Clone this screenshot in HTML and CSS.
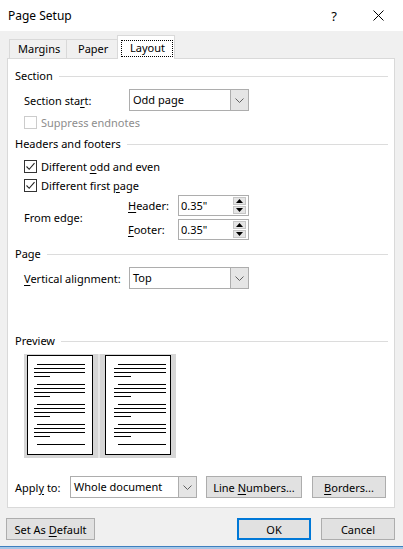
FILE: index.html
```html
<!DOCTYPE html>
<html lang="en">
<head>
    <meta charset="UTF-8">
    <title>Page Setup</title>
    <link rel="stylesheet" href="styles.css">
</head>
<body>
    <div class="titlebar">
        <span class="title">Page Setup</span>
        <span class="help">?</span>
        <svg class="close" width="11" height="11" viewBox="0 0 11 11">
            <path d="M0.5 0.5 L10.5 10.5 M10.5 0.5 L0.5 10.5" stroke="#000" stroke-width="1"/>
        </svg>
    </div>

    <div class="dialog">
        <div class="tabs">
            <div class="tab tab-first">Margins</div>
            <div class="tab">Paper</div>
            <div class="tab selected"><span class="focus">Layout</span></div>
        </div>

        <div class="panel">
            <div class="group-title">Section</div>
            <div class="row indent row-combo">
                <span class="label">Section sta<u>r</u>t:</span>
                <div class="combo combo-wide">
                    <span class="value">Odd page</span>
                    <span class="drop"><svg width="9" height="5" viewBox="0 0 9 5"><path d="M0.5 0.5 L4.5 4.5 L8.5 0.5" fill="none" stroke="#606060"/></svg></span>
                </div>
            </div>
            <label class="check indent disabled check-suppress">
                <span class="box"></span><span>Suppress endnotes</span>
            </label>

            <div class="group-title gt-headers">Headers and footers</div>
            <label class="check indent check-odd">
                <span class="box"><svg width="11" height="11" viewBox="0 0 11 11"><path d="M1.5 5.5 L4.2 8.3 L9.5 2.2" fill="none" stroke="#222" stroke-width="1.1"/></svg></span><span>Different <u>o</u>dd and even</span>
            </label>
            <label class="check indent check-first">
                <span class="box"><svg width="11" height="11" viewBox="0 0 11 11"><path d="M1.5 5.5 L4.2 8.3 L9.5 2.2" fill="none" stroke="#222" stroke-width="1.1"/></svg></span><span>Different first <u>p</u>age</span>
            </label>
            <div class="edge indent">
                <span class="label">From edge:</span>
                <div class="spins">
                    <div class="spin-row">
                        <span class="spin-label"><u>H</u>eader:</span>
                        <div class="spin">
                            <span class="value">0.35"</span>
                            <span class="arrows">
                                <span class="arrow"><svg width="7" height="4" viewBox="0 0 7 4"><path d="M0 4 L3.5 0 L7 4 Z" fill="#000"/></svg></span>
                                <span class="arrow"><svg width="7" height="4" viewBox="0 0 7 4"><path d="M0 0 L3.5 4 L7 0 Z" fill="#000"/></svg></span>
                            </span>
                        </div>
                    </div>
                    <div class="spin-row">
                        <span class="spin-label"><u>F</u>ooter:</span>
                        <div class="spin">
                            <span class="value">0.35"</span>
                            <span class="arrows">
                                <span class="arrow"><svg width="7" height="4" viewBox="0 0 7 4"><path d="M0 4 L3.5 0 L7 4 Z" fill="#000"/></svg></span>
                                <span class="arrow"><svg width="7" height="4" viewBox="0 0 7 4"><path d="M0 0 L3.5 4 L7 0 Z" fill="#000"/></svg></span>
                            </span>
                        </div>
                    </div>
                </div>
            </div>

            <div class="group-title gt-page">Page</div>
            <div class="row indent row-valign">
                <span class="label"><u>V</u>ertical alignment:</span>
                <div class="combo combo-wide">
                    <span class="value">Top</span>
                    <span class="drop"><svg width="9" height="5" viewBox="0 0 9 5"><path d="M0.5 0.5 L4.5 4.5 L8.5 0.5" fill="none" stroke="#606060"/></svg></span>
                </div>
            </div>

            <div class="group-title gt-preview">Preview</div>
            <div class="preview indent">
                <svg width="152" height="104" viewBox="0 0 152 104">
                    <rect x="0" y="0" width="152" height="104" fill="#d6d6d6"/>
                    <rect x="74" y="0" width="2" height="104" fill="#e8e8e8"/>
                    <rect x="3.5" y="1.5" width="65" height="99" fill="#fff" stroke="#000"/>
                    <rect x="81.5" y="1.5" width="65" height="99" fill="#fff" stroke="#000"/>
                    <g stroke="#000" stroke-width="1">
                        <path d="M13 10.5H61 M10 14.5H61 M10 18.5H61 M10 22.5H26"/>
                        <path d="M13 30.5H61 M10 34.5H61 M10 38.5H61 M10 42.5H26"/>
                        <path d="M13 50.5H61 M10 54.5H61 M10 58.5H61 M10 62.5H26"/>
                        <path d="M13 70.5H61 M10 74.5H61 M10 78.5H61 M10 82.5H26"/>
                        <path d="M13 90.5H61"/>
                        <path d="M94 10.5H142 M90 14.5H142 M90 18.5H142 M90 22.5H107"/>
                        <path d="M94 30.5H142 M90 34.5H142 M90 38.5H142 M90 42.5H107"/>
                        <path d="M94 50.5H142 M90 54.5H142 M90 58.5H142 M90 62.5H107"/>
                        <path d="M94 70.5H142 M90 74.5H142 M90 78.5H142 M90 82.5H107"/>
                        <path d="M94 90.5H142"/>
                    </g>
                </svg>
            </div>

            <div class="apply">
                <span class="apply-label">Appl<u>y</u> to:</span>
                <div class="combo combo-apply">
                    <span class="value">Whole document</span>
                    <span class="drop"><svg width="9" height="5" viewBox="0 0 9 5"><path d="M0.5 0.5 L4.5 4.5 L8.5 0.5" fill="none" stroke="#606060"/></svg></span>
                </div>
                <button class="btn btn-lines">Line <u>N</u>umbers...</button>
                <button class="btn btn-borders"><u>B</u>orders...</button>
            </div>
        </div>

        <div class="footer">
            <button class="btn btn-default">Set As <u>D</u>efault</button>
            <div class="footer-right">
                <button class="btn btn-ok">OK</button>
                <button class="btn btn-cancel">Cancel</button>
            </div>
        </div>
    </div>
    <div class="window-edge"></div>
</body>
</html>
```

FILE: styles.css
```css
body {
    margin: 0;
    font-family: 'Noto Sans', 'Open Sans', sans-serif;
    font-size: 11px;
    color: #000;
    background-color: #f0f0f0;
    height: 549px;
    overflow: hidden;
}

u {
    text-decoration: underline;
    text-underline-offset: 2px;
}

/* Title bar */
.titlebar {
    height: 31px;
    background: #fff;
    display: flex;
    align-items: center;
    padding-left: 8px;
}

.title {
    font-size: 12px;
    flex: 1;
}

.help {
    font-size: 13px;
    margin-right: 36px;
}

.close {
    margin-right: 19px;
}

/* Dialog body */
.dialog {
    padding: 0 8px 0 7px;
}

.tabs {
    display: flex;
    align-items: flex-end;
    height: 23px;
    margin-top: 4px;
    padding-left: 2px;
    position: relative;
    z-index: 1;
}

.tab {
    height: 19px;
    line-height: 18px;
    box-sizing: border-box;
    border: 1px solid #d9d9d9;
    border-bottom: none;
    border-left: none;
    padding: 0 10px;
    background: #f0f0f0;
}

.tab-first {
    border-left: 1px solid #d9d9d9;
    width: 58px;
    padding: 0 0 0 8px;
}

.tab:nth-child(2) {
    width: 51px;
    padding-left: 11px;
}

.tab.selected {
    height: 24px;
    margin-bottom: -1px;
    background: #fff;
    border-left: 1px solid #d9d9d9;
    margin-left: -1px;
    width: 58px;
    padding: 5px 0 0 4px;
    line-height: 14px;
}

.focus {
    display: inline-block;
    outline: 1px dotted #000;
    padding: 0 7px 1px 8px;
}

.panel {
    background: #fff;
    border: 1px solid #d9d9d9;
    padding: 9px 6px 9px 7px;
    position: relative;
}

.group-title {
    display: flex;
    align-items: center;
    height: 16px;
    line-height: 16px;
}

.group-title::after {
    content: "";
    flex: 1;
    border-top: 1px solid #dcdcdc;
    margin-left: 6px;
    margin-top: 1px;
}

.gt-headers { margin-top: 6px; }
.gt-page { margin-top: 6px; }
.gt-preview { margin-top: 44px; }

.indent {
    margin-left: 9px;
}

.row {
    display: flex;
    align-items: center;
}

.row-combo { margin-top: 5px; }
.row-valign { margin-top: 5px; }

.label {
    width: 105px;
}

.combo {
    height: 22px;
    box-sizing: border-box;
    border: 1px solid #adadad;
    display: flex;
    align-items: stretch;
    background: #fff;
}

.combo .value {
    flex: 1;
    line-height: 20px;
    padding-left: 3px;
}

.combo .drop {
    width: 17px;
    background: #e5e5e5;
    border-left: 1px solid #adadad;
    display: flex;
    align-items: center;
    justify-content: center;
}

.combo-wide {
    width: 120px;
}

/* Checkboxes */
.check {
    display: flex;
    align-items: center;
    height: 16px;
}

.check .box {
    width: 13px;
    height: 13px;
    box-sizing: border-box;
    border: 1px solid #333;
    margin-right: 4px;
    display: flex;
    align-items: center;
    justify-content: center;
    background: #fff;
}

.check.disabled {
    color: #8d8d8d;
}

.check.disabled .box {
    border-color: #cccccc;
}

.check-suppress { margin-top: 3px; }
.check-odd { margin-top: 6px; }
.check-first { margin-top: 3px; }

/* From edge spinners */
.edge {
    display: flex;
    align-items: center;
    margin-top: 2px;
}

.edge .label {
    width: 104px;
}

.spins {
    display: flex;
    flex-direction: column;
    gap: 3px;
}

.spin-row {
    display: flex;
    align-items: center;
}

.spin-label {
    width: 50px;
}

.spin {
    width: 71px;
    height: 21px;
    box-sizing: border-box;
    border: 1px solid #adadad;
    display: flex;
    align-items: center;
    padding-right: 2px;
}

.spin .value {
    flex: 1;
    padding-left: 2px;
}

.arrows {
    display: flex;
    flex-direction: column;
    gap: 1px;
}

.arrow {
    width: 13px;
    height: 8px;
    background: #e5e5e5;
    border: 1px solid #c6c6c6;
    box-sizing: border-box;
    display: flex;
    align-items: center;
    justify-content: center;
}

/* Preview */
.preview {
    margin-top: 5px;
    height: 104px;
}

.preview svg {
    display: block;
}

/* Apply row */
.apply {
    display: flex;
    align-items: center;
    margin-top: 18px;
}

.apply-label {
    width: 55px;
}

.combo-apply {
    width: 127px;
}

.btn {
    font-family: inherit;
    font-size: 11px;
    color: #000;
    height: 22px;
    box-sizing: border-box;
    background: #e1e1e1;
    border: 1px solid #adadad;
    padding: 0;
    text-align: center;
}

.btn-lines {
    width: 96px;
    margin-left: 9px;
}

.btn-borders {
    width: 74px;
    margin-left: 10px;
}

/* Footer */
.footer {
    display: flex;
    justify-content: space-between;
    margin-top: 10px;
}

.btn-default {
    width: 89px;
    margin-left: -1px;
}

.footer-right {
    display: flex;
    gap: 10px;
}

.btn-ok {
    width: 74px;
    border: 2px solid #0078d7;
}

.btn-cancel {
    width: 74px;
}

.window-edge {
    margin-top: 6px;
    height: 4px;
    border-top: 1px solid #3f7fbf;
    background: #a6c6e6;
}
```
